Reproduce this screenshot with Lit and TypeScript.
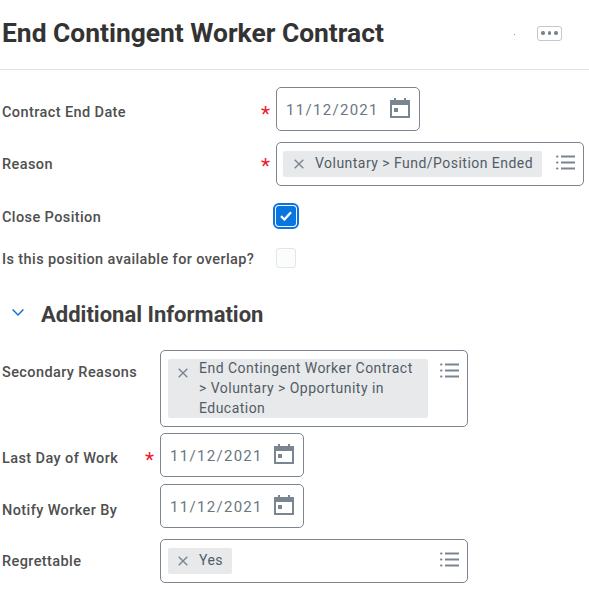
import { LitElement, html, css } from "lit";
import { customElement } from "lit/decorators.js";

const calIcon = html`<svg class="cal" width="20" height="20" viewBox="0 0 20 20"><path fill="#7b858f" fill-rule="evenodd" d="M4 0h2v2h8V0h2v2h4v18H0V2h4V0zM2 7v11h16V7H2z"/><rect fill="#7b858f" x="4" y="10" width="4" height="4"/></svg>`;
const listIcon = html`<svg class="list" width="19" height="15" viewBox="0 0 19 15"><g fill="#7b858f"><rect x="0" y="0.5" width="2.5" height="2" rx="1"/><rect x="5" y="0.5" width="14" height="2"/><rect x="0" y="6.5" width="2.5" height="2" rx="1"/><rect x="5" y="6.5" width="14" height="2"/><rect x="0" y="12.5" width="2.5" height="2" rx="1"/><rect x="5" y="12.5" width="14" height="2"/></g></svg>`;
const xIcon = html`<svg class="x" width="10" height="10" viewBox="0 0 10 10"><path d="M.7.7l8.6 8.6M9.3.7L.7 9.3" stroke="#7b858f" stroke-width="1.4" fill="none"/></svg>`;
const star = html`<span class="star">*</span>`;
const date = html`<div class="box date"><span class="dtext">11/12/2021</span>${calIcon}</div>`;

@customElement("app-root")
export class AppRoot extends LitElement {
  static styles = css`
    :host { display: block; width: 589px; height: 593px; overflow: hidden; background: #fff; font-family: Roboto, "Liberation Sans", sans-serif; color: #4a4a4a; }
    .head { border-bottom: 1px solid #dfe1e3; display: flex; align-items: center; padding: 0 27px 3px 2px; box-sizing: border-box; height: 70px; }
    h1 { margin: 0; font-size: 26.4px; font-weight: 700; color: #333; flex: 1; line-height: 32px; }
    .dot { width: 1px; height: 1px; background: #999; margin-right: 22px; margin-top: 3px; }
    .more { width: 25px; height: 15px; box-sizing: border-box; border: 1px solid #c4c8cc; border-radius: 3px; display: flex; align-items: center; justify-content: center; gap: 3px; }
    .more i { width: 3.4px; height: 3.4px; border-radius: 50%; background: #7b858f; }
    .sec1 { padding-top: 17px; }
    .row { display: flex; align-items: center; padding-left: 2px; }
    .label { font-size: 14.5px; font-weight: 500; color: #4f4f4f; letter-spacing: 0.4px; white-space: nowrap; }
    .lc { display: flex; align-items: center; justify-content: space-between; box-sizing: border-box; padding-right: 6px; }
    .lc.d2 { padding-top: 2px; }
    .lc.d6 { padding-top: 6px; }
    .lc.d8 { padding-top: 8px; }
    .lc.top { align-self: flex-start; margin-top: 14px; }
    .sec1 .lc { width: 274px; }
    .sec2 .lc { width: 158px; }
    .star { color: #ee1c2e; font-size: 21px; line-height: 14px; height: 10px; font-weight: 400; }
    .box { box-sizing: border-box; border: 1px solid #7b858f; border-radius: 5px; background: #fff; display: flex; }
    .date { width: 144px; height: 44px; align-items: center; padding-left: 9px; }
    .dtext { font-size: 15px; letter-spacing: 1.3px; color: #6b7680; width: 104px; padding-top: 2px; }
    .cal { margin-top: -3px; }
    .select { width: 308px; height: 44px; padding: 8px 8px 0 7px; justify-content: space-between; align-items: flex-start; }
    .sec1 .select { padding-left: 6px; }
    .chip { display: flex; align-items: center; background: #e7e9eb; border-radius: 2px; height: 26px; font-size: 14px; letter-spacing: 0.47px; color: #525c66; padding-left: 10px; box-sizing: border-box; }
    .sec1 .chip { padding-left: 11px; }
    .chip .x { margin-right: 11px; flex: none; }
    .chip .t1 { margin-top: -2px; }
    .list { margin-top: 4px; }
    .chk { width: 20px; height: 20px; box-sizing: border-box; border-radius: 3px; }
    .chk.on { background: #0875e1; display: flex; align-items: center; justify-content: center; outline: 2.5px solid #0875e1; outline-offset: 1.5px; }
    .chk.off { border: 1px solid #e3e6e8; background: #fbfcfc; }
    .h2row { display: flex; align-items: center; padding-left: 12px; margin-top: 34px; height: 26px; }
    .h2row svg { margin-right: 17px; margin-top: -6px; }
    h2 { margin: 0; font-size: 22px; font-weight: 700; color: #3f3f3f; line-height: 26px; }
    .multi { height: 77px; }
    .multi .chip { width: 260px; height: 59px; align-items: flex-start; }
    .multi .x { margin-top: 9px; }
    .multi .t { line-height: 20px; margin-top: -1px; }
  `;

  render() {
    return html`
      <div class="head"><h1>End Contingent Worker Contract</h1><div class="dot"></div><div class="more"><i></i><i></i><i></i></div></div>
      <div class="sec1">
        <div class="row"><div class="lc d6"><span class="label">Contract End Date</span>${star}</div>${date}</div>
        <div class="row" style="margin-top:11px"><div class="lc"><span class="label">Reason</span>${star}</div>
          <div class="box select"><div class="chip" style="width:259px">${xIcon}<span class="t1">Voluntary &gt; Fund/Position Ended</span></div>${listIcon}</div></div>
        <div class="row" style="margin-top:20px"><div class="lc d2"><span class="label">Close Position</span></div>
          <div class="chk on"><svg width="12" height="10" viewBox="0 0 12 10"><path d="M1 5.2l3.4 3.3L11 1.2" stroke="#fff" stroke-width="2.3" fill="none"/></svg></div></div>
        <div class="row" style="margin-top:22px"><div class="lc d2"><span class="label">Is this position available for overlap?</span></div><div class="chk off"></div></div>
      </div>
      <div class="h2row"><svg width="12" height="7" viewBox="0 0 12 7"><path d="M.6.6L6 6 11.4.6" stroke="#0b6fd0" stroke-width="1.4" fill="none"/></svg><h2>Additional Information</h2></div>
      <div class="sec2" style="margin-top:22px">
        <div class="row"><div class="lc top"><span class="label">Secondary Reasons</span></div>
          <div class="box select multi"><div class="chip">${xIcon}<span class="t">End Contingent Worker Contract<br>&gt; Voluntary &gt; Opportunity in<br>Education</span></div>${listIcon}</div></div>
        <div class="row" style="margin-top:6px"><div class="lc d6"><span class="label">Last Day of Work</span>${star}</div>${date}</div>
        <div class="row" style="margin-top:7px"><div class="lc d8"><span class="label">Notify Worker By</span></div>${date}</div>
        <div class="row" style="margin-top:11px"><div class="lc"><span class="label">Regrettable</span></div>
          <div class="box select"><div class="chip" style="width:64px">${xIcon}<span class="t1">Yes</span></div>${listIcon}</div></div>
      </div>
    `;
  }
}
